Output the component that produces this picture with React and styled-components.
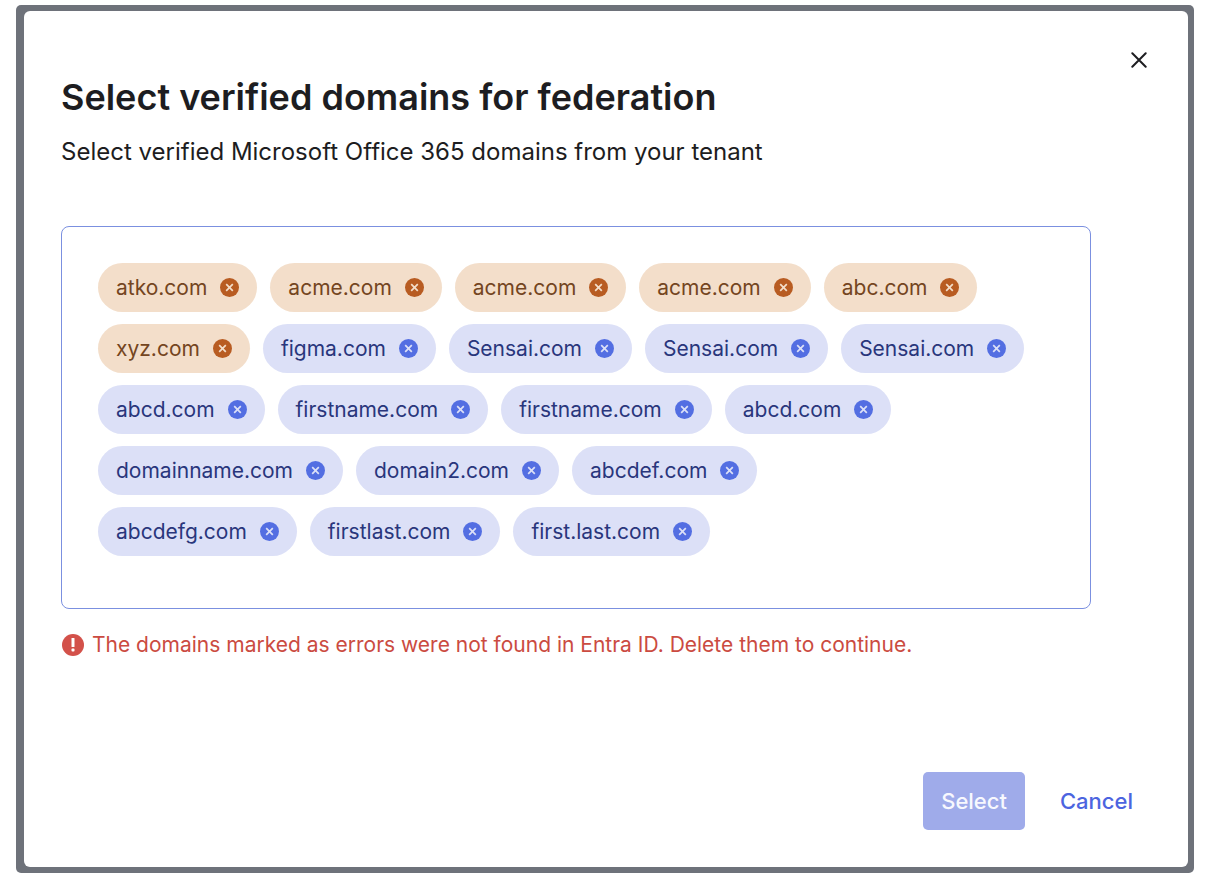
import React, { useState } from 'react';
import styled, { createGlobalStyle } from 'styled-components';

const initialRows = [
    [
        { id: 1, name: 'atko.com', error: true },
        { id: 2, name: 'acme.com', error: true },
        { id: 3, name: 'acme.com', error: true },
        { id: 4, name: 'acme.com', error: true },
        { id: 5, name: 'abc.com', error: true },
    ],
    [
        { id: 6, name: 'xyz.com', error: true },
        { id: 7, name: 'figma.com' },
        { id: 8, name: 'Sensai.com' },
        { id: 9, name: 'Sensai.com' },
        { id: 10, name: 'Sensai.com' },
    ],
    [
        { id: 11, name: 'abcd.com' },
        { id: 12, name: 'firstname.com' },
        { id: 13, name: 'firstname.com' },
        { id: 14, name: 'abcd.com' },
    ],
    [
        { id: 15, name: 'domainname.com' },
        { id: 16, name: 'domain2.com' },
        { id: 17, name: 'abcdef.com' },
    ],
    [
        { id: 18, name: 'abcdefg.com' },
        { id: 19, name: 'firstlast.com' },
        { id: 20, name: 'first.last.com' },
    ],
];

const DomainChip = ({ domain, onRemove }) => (
    <Chip $error={domain.error}>
        <span>{domain.name}</span>
        <RemoveButton type="button" $error={domain.error} aria-label={`Remove ${domain.name}`} onClick={onRemove}>
            <svg width="9" height="9" viewBox="0 0 9 9" fill="none" stroke="currentColor" strokeWidth="1.7">
                <path d="M1.2 1.2l6.6 6.6M7.8 1.2l-6.6 6.6" />
            </svg>
        </RemoveButton>
    </Chip>
);

const App = () => {
    const [rows, setRows] = useState(initialRows);

    const removeDomain = (id) => {
        setRows(rows.map((row) => row.filter((domain) => domain.id !== id)));
    };

    const hasErrors = rows.some((row) => row.some((domain) => domain.error));

    return (
        <>
            <GlobalStyle />
            <Backdrop>
                <Dialog role="dialog" aria-labelledby="dialog-title">
                    <CloseButton type="button" aria-label="Close">
                        <svg width="16" height="16" viewBox="0 0 16 16" fill="none" stroke="currentColor" strokeWidth="2" strokeLinecap="round">
                            <path d="M1.3 1.3l13.4 13.4M14.7 1.3L1.3 14.7" />
                        </svg>
                    </CloseButton>
                    <Title id="dialog-title">Select verified domains for federation</Title>
                    <Subtitle>Select verified Microsoft Office 365 domains from your tenant</Subtitle>
                    <DomainBox>
                        {rows.map((row, index) => (
                            <ChipRow key={index}>
                                {row.map((domain) => (
                                    <DomainChip key={domain.id} domain={domain} onRemove={() => removeDomain(domain.id)} />
                                ))}
                            </ChipRow>
                        ))}
                    </DomainBox>
                    {hasErrors && (
                        <ErrorMessage>
                            <svg width="22" height="22" viewBox="0 0 22 22">
                                <circle cx="11" cy="11" r="11" fill="#d3514a" />
                                <rect x="9.5" y="4" width="3" height="9" rx="0.6" fill="#fff" />
                                <rect x="9.5" y="14.6" width="3" height="3" rx="0.8" fill="#fff" />
                            </svg>
                            <span>The domains marked as errors were not found in Entra ID. Delete them to continue.</span>
                        </ErrorMessage>
                    )}
                    <Actions>
                        <Button type="button" $primary disabled={hasErrors}>Select</Button>
                        <Button type="button">Cancel</Button>
                    </Actions>
                </Dialog>
            </Backdrop>
        </>
    );
};

export default App;

const GlobalStyle = createGlobalStyle`
    * {
        box-sizing: border-box;
    }

    body {
        margin: 0;
        background-color: #fff;
        color: #1d1d21;
        font-family: Inter, 'Liberation Sans', sans-serif;
    }

    button {
        border: none;
        padding: 0;
        font-family: inherit;
        cursor: pointer;
    }
`;

const Backdrop = styled.div`
    margin: 5px 26px 9px 16px;
    padding: 6px 6px 6px 8px;
    background-color: #6e727a;
    border-radius: 5px;
`;

const Dialog = styled.main`
    display: flex;
    flex-direction: column;
    padding: 37px;
    background-color: #fff;
    border-radius: 6px;
`;

const CloseButton = styled.button`
    display: flex;
    align-items: center;
    justify-content: center;
    align-self: flex-end;
    width: 24px;
    height: 24px;
    background: none;
    color: #1d1d21;
`;

const Title = styled.h1`
    margin: 4px 0 18px;
    font-size: 36px;
    line-height: 42px;
    font-weight: 600;
`;

const Subtitle = styled.p`
    margin: 0 0 58px;
    font-size: 24px;
    line-height: 32px;
`;

const DomainBox = styled.div`
    display: flex;
    flex-direction: column;
    gap: 12px;
    margin-right: 60px;
    padding: 36px 36px 52px;
    border: 1px solid #7b90e0;
    border-radius: 8px;
`;

const ChipRow = styled.div`
    display: flex;
    flex-wrap: wrap;
    gap: 13px;
`;

const Chip = styled.div`
    display: flex;
    align-items: center;
    gap: 13px;
    height: 49px;
    padding: 0 18px;
    border-radius: 25px;
    background-color: ${({ $error }) => ($error ? '#f3deca' : '#dce0f7')};
    color: ${({ $error }) => ($error ? '#744521' : '#29367c')};
    font-size: 21px;
    line-height: 32px;
`;

const RemoveButton = styled.button`
    display: flex;
    align-items: center;
    justify-content: center;
    width: 19px;
    height: 19px;
    border-radius: 50%;
    background-color: ${({ $error }) => ($error ? '#b85c22' : '#536ee2')};
    color: ${({ $error }) => ($error ? '#f3deca' : '#dce0f7')};
`;

const ErrorMessage = styled.p`
    display: flex;
    align-items: center;
    gap: 8px;
    margin: 20px 0 0;
    padding-left: 1px;
    color: #cb4b41;
    font-size: 21px;
    line-height: 32px;
`;

const Actions = styled.div`
    display: flex;
    justify-content: flex-end;
    gap: 17px;
    margin-top: 111px;
`;

const Button = styled.button`
    height: 58px;
    padding: 0 18px;
    border-radius: 5px;
    background-color: ${({ $primary }) => ($primary ? '#9fabea' : 'transparent')};
    color: ${({ $primary }) => ($primary ? '#f7f8fe' : '#4c64e0')};
    font-size: 22px;
    font-weight: 500;

    &:disabled {
        cursor: default;
    }
`;
